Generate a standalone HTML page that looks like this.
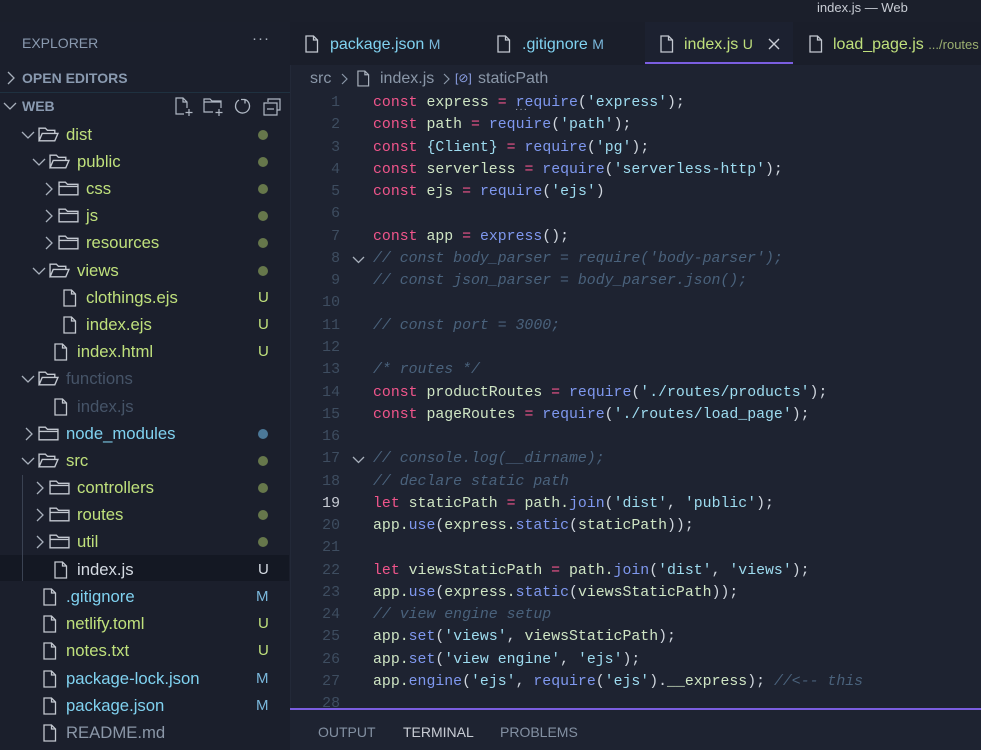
<!DOCTYPE html>
<html><head><meta charset="utf-8"><style>
*{margin:0;padding:0;box-sizing:border-box}
body{width:981px;height:750px;overflow:hidden;background:#1e2331;font-family:"Liberation Sans",sans-serif;position:relative}
.a{position:absolute;white-space:pre}
#title{left:0;top:0;width:981px;height:22px;background:#1b1f2b}
#side{left:0;top:22px;width:290px;height:728px;background:#1b1f2c}
#tabs{left:290px;top:22px;width:691px;height:43px;background:#1a1e2a}
.row{position:absolute;left:0;width:290px;height:27px;font-size:16.7px;line-height:27px}
.row svg{position:absolute}
.g{color:#bfe07c}.b{color:#80d2f0}.w{color:#d5dbe3}.d{color:#465468}.r{color:#8b97a8}
.badge{position:absolute;left:258px;font-size:15px}
.dot{position:absolute;left:258px;top:9px;width:10px;height:10px;border-radius:50%;background:#66774b}
.code{font-family:"Liberation Mono",monospace;font-size:14.85px;line-height:22px;color:#cfe5c4}
.ln{font-family:"Liberation Mono",monospace;font-size:14.85px;color:#3e4d60;text-align:right;width:50px;left:290px}
.k{color:#f0558b}.f{color:#7f98ef}.s{color:#9edcf0}.c{color:#4a627c;font-style:italic}.p{color:#cfd5dd}
.bc{position:absolute;top:70px;font-size:16px;line-height:18px;color:#8a97a8}
</style></head><body>
<div class="a" id="title"></div>
<div class="a" style="left:817px;top:0;font-size:13px;line-height:15px;color:#c8ccd4">index.js — Web</div>
<div class="a" id="side"></div>
<div class="a" id="tabs"></div>
<div class="a" style="left:645px;top:22px;width:148px;height:43px;background:#1c2130"></div>
<div class="a" style="left:645px;top:62px;width:148px;height:2px;background:#7b5ee0"></div>
<div class="a" style="left:290px;top:65px;width:1px;height:645px;background:#232938"></div>

<!-- tabs -->
<svg class="a" style="left:305px;top:35px" width="14" height="18" viewBox="0 0 14 18" fill="none" stroke="#c3c8d0" stroke-width="1.3"><path d="M1 1h7.5l4 4v12H1z M8.5 1v4h4"/></svg>
<div class="a" style="left:330px;top:36px;font-size:16px;color:#80d2f0">package.json <span style="font-size:14px;color:#7ab8dc">M</span></div>
<svg class="a" style="left:497px;top:35px" width="14" height="18" viewBox="0 0 14 18" fill="none" stroke="#c3c8d0" stroke-width="1.3"><path d="M1 1h7.5l4 4v12H1z M8.5 1v4h4"/></svg>
<div class="a" style="left:522px;top:36px;font-size:16px;color:#80d2f0">.gitignore <span style="font-size:14px;color:#7ab8dc">M</span></div>
<svg class="a" style="left:660px;top:35px" width="14" height="18" viewBox="0 0 14 18" fill="none" stroke="#c3c8d0" stroke-width="1.3"><path d="M1 1h7.5l4 4v12H1z M8.5 1v4h4"/></svg>
<div class="a" style="left:684px;top:36px;font-size:16px;color:#bfe07c">index.js <span style="font-size:14px">U</span></div>
<svg class="a" style="left:768px;top:38px" width="12" height="12" viewBox="0 0 12 12" stroke="#c8ccd4" stroke-width="1.4"><path d="M1 1l10 10M11 1L1 11"/></svg>
<svg class="a" style="left:809px;top:35px" width="14" height="18" viewBox="0 0 14 18" fill="none" stroke="#c3c8d0" stroke-width="1.3"><path d="M1 1h7.5l4 4v12H1z M8.5 1v4h4"/></svg>
<div class="a" style="left:833px;top:36px;font-size:16px;color:#bfe07c">load_page.js <span style="font-size:13px;color:#9bb070">.../routes</span></div>

<!-- breadcrumb -->
<div class="bc" style="left:310px">src</div>
<svg class="a" style="left:340px;top:73px" width="8" height="12" viewBox="0 0 8 12" fill="none" stroke="#8a97a8" stroke-width="1.2"><path d="M2 1l5 5-5 5"/></svg>
<svg class="a" style="left:357px;top:70px" width="13" height="17" viewBox="0 0 14 18" fill="none" stroke="#a8b0bc" stroke-width="1.3"><path d="M1 1h7.5l4 4v12H1z M8.5 1v4h4"/></svg>
<div class="bc" style="left:380px">index.js</div>
<svg class="a" style="left:442px;top:73px" width="8" height="12" viewBox="0 0 8 12" fill="none" stroke="#8a97a8" stroke-width="1.2"><path d="M2 1l5 5-5 5"/></svg>
<div class="a" style="left:455px;top:71px;font-size:12px;color:#8fa4ea">[⊘]</div>
<div class="bc" style="left:478px">staticPath</div>

<!-- sidebar header -->
<div class="a" style="left:22px;top:35px;font-size:14px;color:#8a9ab0">EXPLORER</div>
<div class="a" style="left:252px;top:30px;font-size:15px;color:#a8b0bc;letter-spacing:1px">···</div>
<div class="a" style="left:0;top:92px;width:290px;height:1px;background:#1f3140"></div>
<svg class="a" style="left:6px;top:71px" width="10" height="14" viewBox="0 0 10 14" fill="none" stroke="#a8b0bc" stroke-width="1.3"><path d="M2 1l6 6-6 6"/></svg>
<div class="a" style="left:22px;top:70px;font-size:14px;font-weight:bold;color:#8a9ab0">OPEN EDITORS</div>
<svg class="a" style="left:3px;top:101px" width="14" height="10" viewBox="0 0 14 10" fill="none" stroke="#a8b0bc" stroke-width="1.3"><path d="M1 2l6 6 6-6"/></svg>
<div class="a" style="left:22px;top:98px;font-size:14px;font-weight:bold;color:#8a9ab0">WEB</div>
<svg class="a" style="left:174px;top:97px" width="20" height="20" viewBox="0 0 20 20" fill="none" stroke="#b0b8c4" stroke-width="1.2"><path d="M10 17H2V1h7l4 4v6 M9 1v4h4 M15 12v7M11.5 15.5h7"/></svg>
<svg class="a" style="left:203px;top:97px" width="22" height="20" viewBox="0 0 22 20" fill="none" stroke="#b0b8c4" stroke-width="1.2"><path d="M10 15H1V2h6l2 2h9v7 M1 5h17 M16 12v7M12.5 15.5h7"/></svg>
<svg class="a" style="left:233px;top:97px" width="18" height="18" viewBox="0 0 18 18" fill="none" stroke="#b0b8c4" stroke-width="1.3"><path d="M6 3A7 7 0 1 0 12 2.5 M12 2.5V6.5 M12 2.5H8"/></svg>
<svg class="a" style="left:263px;top:98px" width="18" height="18" viewBox="0 0 18 18" fill="none" stroke="#b0b8c4" stroke-width="1.2"><path d="M5 4V1h12v11h-3 M1 5h13v12H1z M4 11h7"/></svg>

<!-- selected row -->
<div class="a" style="left:0;top:555px;width:289px;height:26px;background:#141823"></div>
<div class="a" style="left:22px;top:475px;width:1px;height:106px;background:#3a4252"></div>

<div id="tree"></div>
<div id="code"></div>

<!-- panel -->
<div class="a" style="left:290px;top:708px;width:691px;height:2px;background:#7b5ee0"></div>
<div class="a" style="left:318px;top:724px;font-size:14px;color:#8390a2">OUTPUT</div>
<div class="a" style="left:403px;top:724px;font-size:14px;color:#c8ccd4">TERMINAL</div>
<div class="a" style="left:500px;top:724px;font-size:14px;color:#8390a2">PROBLEMS</div>

<script>
var F='<path d="M1 1h7.5l4 4v12H1z M8.5 1v4h4"/>';
function file(x){return '<svg style="left:'+x+'px;top:5px" width="14" height="18" viewBox="0 0 14 18" fill="none" stroke="#c3c8d0" stroke-width="1.3">'+F+'</svg>'}
function fold(x,open){return '<svg style="left:'+x+'px;top:5px" width="21" height="17" viewBox="0 0 20 16" fill="none" stroke="#c3c8d0" stroke-width="1.3">'+(open?'<path d="M1 14V2h6l2 2h7v3 M1 14l3-7h15l-3 7z"/>':'<path d="M1 2h6l2 2h10v10H1z M1 6h18"/>')+'</svg>'}
function chev(x,open){return open?'<svg style="left:'+x+'px;top:9px" width="14" height="10" viewBox="0 0 14 10" fill="none" stroke="#a8b0bc" stroke-width="1.3"><path d="M1 2l6 6 6-6"/></svg>':'<svg style="left:'+(x+3)+'px;top:7px" width="10" height="14" viewBox="0 0 10 14" fill="none" stroke="#a8b0bc" stroke-width="1.3"><path d="M2 1l6 6-6 6"/></svg>'}
var rows=[
[133,66,'fo','dist','g','dot'],[160,77,'fo','public','g','dot'],[187,86,'fc','css','g','dot'],[214,86,'fc','js','g','dot'],[241,86,'fc','resources','g','dot'],[269,77,'fo','views','g','dot'],
[296,86,'f','clothings.ejs','g','U'],[323,86,'f','index.ejs','g','U'],[350,77,'f','index.html','g','U'],
[377,66,'fo','functions','d',''],[405,77,'f','index.js','d',''],[432,66,'fc','node_modules','b','bdot'],[459,66,'fo','src','g','dot'],
[486,77,'fc','controllers','g','dot'],[513,77,'fc','routes','g','dot'],[540,77,'fc','util','g','dot'],[568,77,'f','index.js','w','Uw'],
[595,66,'f','.gitignore','b','M'],[622,66,'f','netlify.toml','g','U'],[649,66,'f','notes.txt','g','U'],[677,66,'f','package-lock.json','b','M'],[704,66,'f','package.json','b','M'],[731,66,'f','README.md','r','']];
var h='';
rows.forEach(function(r){
 var t=r[0]-12,x=r[1],s='<div class="row" style="top:'+t+'px">';
 if(r[2]=='f'){s+=file(x-23)}else{s+=chev(x-45,r[2]=='fo');s+=fold(x-28,r[2]=='fo')}
 s+='<span class="a '+r[4]+'" style="left:'+x+'px;top:0">'+r[3]+'</span>';
 var b=r[5];
 if(b=='dot')s+='<div class="dot"></div>';
 else if(b=='bdot')s+='<div class="dot" style="background:#4b7898"></div>';
 else if(b=='U')s+='<span class="badge" style="color:#bfe07c">U</span>';
 else if(b=='Uw')s+='<span class="badge" style="color:#d5dbe3">U</span>';
 else if(b=='M')s+='<span class="badge" style="left:256px;color:#7ab8dc">M</span>';
 s+='</div>';h+=s;});
document.getElementById('tree').innerHTML=h;
function K(t){return '<span class="k">'+t+'</span>'}function Fn(t){return '<span class="f">'+t+'</span>'}function S(t){return '<span class="s">'+t+'</span>'}function C(t){return '<span class="c">'+t+'</span>'}function P(t){return '<span class="p">'+t+'</span>'}
var L=[
K('const')+' express '+K('=')+' '+Fn('require')+P('(')+S("'express'")+P(');'),
K('const')+' path '+K('=')+' '+Fn('require')+P('(')+S("'path'")+P(');'),
K('const')+' '+S('{Client}')+' '+K('=')+' '+Fn('require')+P('(')+S("'pg'")+P(');'),
K('const')+' serverless '+K('=')+' '+Fn('require')+P('(')+S("'serverless-http'")+P(');'),
K('const')+' ejs '+K('=')+' '+Fn('require')+P('(')+S("'ejs'")+P(')'),
'',
K('const')+' app '+K('=')+' '+Fn('express')+P('();'),
C("// const body_parser = require('body-parser');"),
C("// const json_parser = body_parser.json();"),
'',
C("// const port = 3000;"),
'',
C("/* routes */"),
K('const')+' productRoutes '+K('=')+' '+Fn('require')+P('(')+S("'./routes/products'")+P(');'),
K('const')+' pageRoutes '+K('=')+' '+Fn('require')+P('(')+S("'./routes/load_page'")+P(');'),
'',
C("// console.log(__dirname);"),
C("// declare static path"),
K('let')+' staticPath '+K('=')+' path.'+Fn('join')+P('(')+S("'dist'")+P(', ')+S("'public'")+P(');'),
'app.'+Fn('use')+P('(')+'express.'+Fn('static')+P('(')+'staticPath'+P('));'),
'',
K('let')+' viewsStaticPath '+K('=')+' path.'+Fn('join')+P('(')+S("'dist'")+P(', ')+S("'views'")+P(');'),
'app.'+Fn('use')+P('(')+'express.'+Fn('static')+P('(')+'viewsStaticPath'+P('));'),
C("// view engine setup"),
'app.'+Fn('set')+P('(')+S("'views'")+P(', ')+'viewsStaticPath'+P(');'),
'app.'+Fn('set')+P('(')+S("'view engine'")+P(', ')+S("'ejs'")+P(');'),
'app.'+Fn('engine')+P('(')+S("'ejs'")+P(', ')+Fn('require')+P('(')+S("'ejs'")+P(').')+'__express'+P(');')+' '+C('//&lt;-- this'),
''];
var c='';
for(var i=0;i<28;i++){var y=103+i*22.27-11;
 c+='<div class="a ln" style="top:'+y+'px;line-height:22px;'+(i==18?'color:#c8ccd4':'')+'">'+(i+1)+'</div>';
 c+='<div class="a code" style="left:373px;top:'+y+'px">'+L[i]+'</div>';
 if(i==7||i==16)c+='<svg class="a" style="left:352px;top:'+(y+8)+'px" width="13" height="8" viewBox="0 0 13 8" fill="none" stroke="#a8b0bc" stroke-width="1.3"><path d="M1 1l5.5 5.5L12 1"/></svg>';
}
c+='<div class="a" style="left:515px;top:104px;font-size:10px;color:#a8b0bc;letter-spacing:1px">···</div>';
document.getElementById('code').innerHTML=c;
</script>
</body></html>
